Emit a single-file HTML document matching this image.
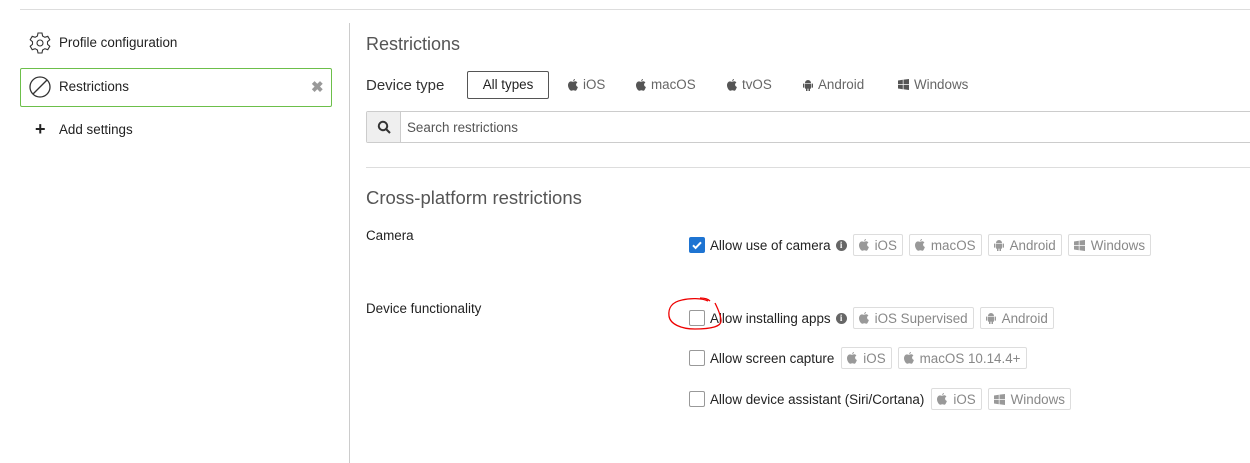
<!DOCTYPE html>
<html><head><meta charset="utf-8"><style>
*{box-sizing:border-box;margin:0;padding:0}
body{width:1250px;height:463px;background:#fff;font-family:"Liberation Sans",sans-serif;color:#222;position:relative;overflow:hidden;font-size:13.4px}
.a{position:absolute;white-space:nowrap}
.plat{color:#666;font-size:13.4px;display:flex;align-items:center;gap:5px}
.badge{display:inline-flex;align-items:center;gap:6px;height:22px;padding:0 5px;border:1px solid #ddd;border-radius:2px;color:#888;font-size:13.4px;margin-right:6px}
.row{display:flex;align-items:center;position:absolute;left:689px}
.cb{width:16px;height:16px;border:1px solid #999;border-radius:2px;margin-right:5px;background:#fff}
.cb.on{background:#1e74d2;border-color:#1e74d2}
.info{display:inline-block;width:11px;height:11px;border-radius:50%;background:#666;color:#fff;font-size:9px;font-weight:bold;text-align:center;line-height:11px;margin:0 6px 0 5px;font-family:"Liberation Serif",serif}
svg{display:block}
</style></head><body>
<div class="a" style="left:20px;top:9px;width:1230px;height:1px;background:#ddd"></div>
<div class="a" style="left:349px;top:23px;width:1px;height:440px;background:#ccc"></div>

<svg class="a" style="left:28px;top:31px" width="24" height="24" viewBox="0 0 24 24" fill="none" stroke="#333" stroke-width="1.1"><path d="M10 2h4l.6 3 2.3 1.3 2.9-1 2 3.4-2.3 2v2.6l2.3 2-2 3.4-2.9-1-2.3 1.3-.6 3h-4l-.6-3-2.3-1.3-2.9 1-2-3.4 2.3-2v-2.6l-2.3-2 2-3.4 2.9 1L9.4 5z"/><circle cx="12" cy="12" r="3"/></svg>
<div class="a" style="left:59px;top:35px">Profile configuration</div>

<div class="a" style="left:20px;top:68px;width:312px;height:39px;border:1px solid #6cbf4a;border-radius:2px"></div>
<svg class="a" style="left:29px;top:76px" width="22" height="22" viewBox="0 0 22 22" fill="none" stroke="#333" stroke-width="1.3"><circle cx="11" cy="11" r="10"/><path d="M4 18L18 4"/></svg>
<div class="a" style="left:59px;top:79px">Restrictions</div>
<div class="a" style="left:311px;top:78px;color:#999;font-size:15px;font-weight:bold">✖</div>

<div class="a" style="left:35px;top:119px;font-size:18px;font-weight:bold">+</div>
<div class="a" style="left:59px;top:122px">Add settings</div>

<div class="a" style="left:366px;top:34px;font-size:18px;color:#555">Restrictions</div>
<div class="a" style="left:366px;top:77px;font-size:15px;color:#333">Device type</div>
<div class="a" style="left:467px;top:71px;width:82px;height:28px;border:1px solid #555;border-radius:2px;text-align:center;line-height:26px">All types</div>

<div class="a plat" style="left:568px;top:77px"><svg width="10" height="12" viewBox="0 0 10 12"><path fill="#555" d="M7 0c0 1-.8 2-1.8 2 0-1 .8-2 1.8-2zM5 2.8c.6 0 1.3-.5 2.1-.5.5 0 1.7.2 2.3 1.2-2 1.2-1.6 3.8.5 4.5-.4 1.1-1.3 3.8-2.5 3.8-.8 0-1-.5-2-.5s-1.3.5-2 .5C2 11.8 0 9 0 6.3 0 4 1.5 2.4 3 2.4c.8 0 1.5.4 2 .4z"/></svg>iOS</div>
<div class="a plat" style="left:636px;top:77px"><svg width="10" height="12" viewBox="0 0 10 12"><path fill="#555" d="M7 0c0 1-.8 2-1.8 2 0-1 .8-2 1.8-2zM5 2.8c.6 0 1.3-.5 2.1-.5.5 0 1.7.2 2.3 1.2-2 1.2-1.6 3.8.5 4.5-.4 1.1-1.3 3.8-2.5 3.8-.8 0-1-.5-2-.5s-1.3.5-2 .5C2 11.8 0 9 0 6.3 0 4 1.5 2.4 3 2.4c.8 0 1.5.4 2 .4z"/></svg>macOS</div>
<div class="a plat" style="left:727px;top:77px"><svg width="10" height="12" viewBox="0 0 10 12"><path fill="#555" d="M7 0c0 1-.8 2-1.8 2 0-1 .8-2 1.8-2zM5 2.8c.6 0 1.3-.5 2.1-.5.5 0 1.7.2 2.3 1.2-2 1.2-1.6 3.8.5 4.5-.4 1.1-1.3 3.8-2.5 3.8-.8 0-1-.5-2-.5s-1.3.5-2 .5C2 11.8 0 9 0 6.3 0 4 1.5 2.4 3 2.4c.8 0 1.5.4 2 .4z"/></svg>tvOS</div>
<div class="a plat" style="left:803px;top:77px"><svg width="10" height="12" viewBox="0 0 10 12"><path fill="#555" d="M2 4a3 3 0 016 0zM2 4.6h6v5H2zM0 4.6h1.4v4H0zM8.6 4.6H10v4H8.6zM3 9h1.5v3H3zM5.5 9H7v3H5.5z"/></svg>Android</div>
<div class="a plat" style="left:898px;top:77px"><svg width="11" height="11" viewBox="0 0 11 11"><path fill="#555" d="M0 1.5l4.8-.8v4.3H0zM5.5.6L11 0v5H5.5zM0 5.8h4.8v4.4L0 9.5zM5.5 5.8H11V11l-5.5-.7z"/></svg>Windows</div>

<div class="a" style="left:366px;top:111px;width:884px;height:32px;border:1px solid #ccc;border-right:none;border-radius:2px 0 0 2px"></div>
<div class="a" style="left:367px;top:112px;width:34px;height:30px;background:#efefef;border-right:1px solid #ccc"></div>
<svg class="a" style="left:377px;top:120px" width="14" height="14" viewBox="0 0 14 14" fill="none" stroke="#333" stroke-width="2"><circle cx="6" cy="6" r="4.2"/><path d="M9 9l4 4"/></svg>
<div class="a" style="left:407px;top:120px;color:#555">Search restrictions</div>

<div class="a" style="left:366px;top:167px;width:884px;height:1px;background:#ddd"></div>
<div class="a" style="left:366px;top:187px;font-size:18.5px;color:#555">Cross-platform restrictions</div>
<div class="a" style="left:366px;top:228px">Camera</div>
<div class="a" style="left:366px;top:301px">Device functionality</div>

<div class="row" style="top:234px"><div class="cb on"><svg width="14" height="14" viewBox="0 0 14 14"><path d="M3 7.3l2.6 2.6L11 4.3" fill="none" stroke="#fff" stroke-width="2"/></svg></div>Allow use of camera<span class="info">i</span>
<span class="badge"><svg width="10" height="12" viewBox="0 0 10 12"><path fill="#999" d="M7 0c0 1-.8 2-1.8 2 0-1 .8-2 1.8-2zM5 2.8c.6 0 1.3-.5 2.1-.5.5 0 1.7.2 2.3 1.2-2 1.2-1.6 3.8.5 4.5-.4 1.1-1.3 3.8-2.5 3.8-.8 0-1-.5-2-.5s-1.3.5-2 .5C2 11.8 0 9 0 6.3 0 4 1.5 2.4 3 2.4c.8 0 1.5.4 2 .4z"/></svg>iOS</span>
<span class="badge"><svg width="10" height="12" viewBox="0 0 10 12"><path fill="#999" d="M7 0c0 1-.8 2-1.8 2 0-1 .8-2 1.8-2zM5 2.8c.6 0 1.3-.5 2.1-.5.5 0 1.7.2 2.3 1.2-2 1.2-1.6 3.8.5 4.5-.4 1.1-1.3 3.8-2.5 3.8-.8 0-1-.5-2-.5s-1.3.5-2 .5C2 11.8 0 9 0 6.3 0 4 1.5 2.4 3 2.4c.8 0 1.5.4 2 .4z"/></svg>macOS</span>
<span class="badge"><svg width="10" height="12" viewBox="0 0 10 12"><path fill="#999" d="M2 4a3 3 0 016 0zM2 4.6h6v5H2zM0 4.6h1.4v4H0zM8.6 4.6H10v4H8.6zM3 9h1.5v3H3zM5.5 9H7v3H5.5z"/></svg>Android</span>
<span class="badge"><svg width="11" height="11" viewBox="0 0 11 11"><path fill="#999" d="M0 1.5l4.8-.8v4.3H0zM5.5.6L11 0v5H5.5zM0 5.8h4.8v4.4L0 9.5zM5.5 5.8H11V11l-5.5-.7z"/></svg>Windows</span></div>

<div class="row" style="top:307px"><div class="cb"></div>Allow installing apps<span class="info">i</span>
<span class="badge"><svg width="10" height="12" viewBox="0 0 10 12"><path fill="#999" d="M7 0c0 1-.8 2-1.8 2 0-1 .8-2 1.8-2zM5 2.8c.6 0 1.3-.5 2.1-.5.5 0 1.7.2 2.3 1.2-2 1.2-1.6 3.8.5 4.5-.4 1.1-1.3 3.8-2.5 3.8-.8 0-1-.5-2-.5s-1.3.5-2 .5C2 11.8 0 9 0 6.3 0 4 1.5 2.4 3 2.4c.8 0 1.5.4 2 .4z"/></svg>iOS Supervised</span>
<span class="badge"><svg width="10" height="12" viewBox="0 0 10 12"><path fill="#999" d="M2 4a3 3 0 016 0zM2 4.6h6v5H2zM0 4.6h1.4v4H0zM8.6 4.6H10v4H8.6zM3 9h1.5v3H3zM5.5 9H7v3H5.5z"/></svg>Android</span></div>

<div class="row" style="top:347px"><div class="cb"></div>Allow screen capture<span style="width:7px"></span>
<span class="badge"><svg width="10" height="12" viewBox="0 0 10 12"><path fill="#999" d="M7 0c0 1-.8 2-1.8 2 0-1 .8-2 1.8-2zM5 2.8c.6 0 1.3-.5 2.1-.5.5 0 1.7.2 2.3 1.2-2 1.2-1.6 3.8.5 4.5-.4 1.1-1.3 3.8-2.5 3.8-.8 0-1-.5-2-.5s-1.3.5-2 .5C2 11.8 0 9 0 6.3 0 4 1.5 2.4 3 2.4c.8 0 1.5.4 2 .4z"/></svg>iOS</span>
<span class="badge"><svg width="10" height="12" viewBox="0 0 10 12"><path fill="#999" d="M7 0c0 1-.8 2-1.8 2 0-1 .8-2 1.8-2zM5 2.8c.6 0 1.3-.5 2.1-.5.5 0 1.7.2 2.3 1.2-2 1.2-1.6 3.8.5 4.5-.4 1.1-1.3 3.8-2.5 3.8-.8 0-1-.5-2-.5s-1.3.5-2 .5C2 11.8 0 9 0 6.3 0 4 1.5 2.4 3 2.4c.8 0 1.5.4 2 .4z"/></svg>macOS 10.14.4+</span></div>

<div class="row" style="top:388px"><div class="cb"></div>Allow device assistant (Siri/Cortana)<span style="width:7px"></span>
<span class="badge"><svg width="10" height="12" viewBox="0 0 10 12"><path fill="#999" d="M7 0c0 1-.8 2-1.8 2 0-1 .8-2 1.8-2zM5 2.8c.6 0 1.3-.5 2.1-.5.5 0 1.7.2 2.3 1.2-2 1.2-1.6 3.8.5 4.5-.4 1.1-1.3 3.8-2.5 3.8-.8 0-1-.5-2-.5s-1.3.5-2 .5C2 11.8 0 9 0 6.3 0 4 1.5 2.4 3 2.4c.8 0 1.5.4 2 .4z"/></svg>iOS</span>
<span class="badge"><svg width="11" height="11" viewBox="0 0 11 11"><path fill="#999" d="M0 1.5l4.8-.8v4.3H0zM5.5.6L11 0v5H5.5zM0 5.8h4.8v4.4L0 9.5zM5.5 5.8H11V11l-5.5-.7z"/></svg>Windows</span></div>

<svg class="a" style="left:664px;top:295px" width="64" height="40" viewBox="0 0 64 40" fill="none" stroke="#e00" stroke-width="1.3"><path d="M44 6C38 3 26 3 18 5 8 7 4 13 5 21c1 8 12 13 26 13 14 0 26-2 26-8 0-5-3-12-6-18"/><path d="M36 3c4 0 8 1 10 3"/></svg>
</body></html>
